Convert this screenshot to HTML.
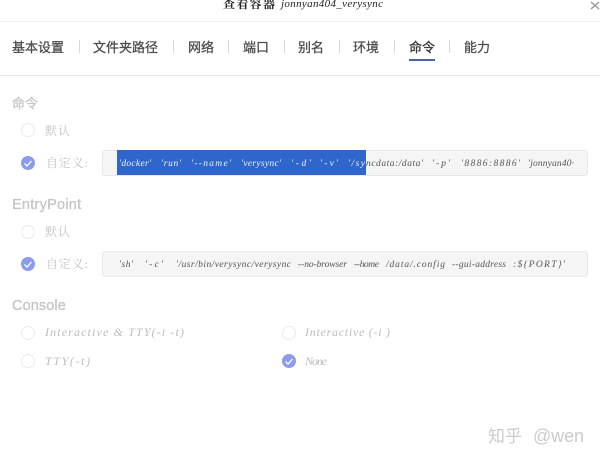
<!DOCTYPE html>
<html><head><meta charset="utf-8"><style>
html,body{margin:0;padding:0;background:#fff}
#p{position:relative;width:600px;height:461px;overflow:hidden;background:#fff;font-family:"Liberation Sans","Noto Sans CJK SC",sans-serif}
#p div{position:absolute;white-space:nowrap}
.tab{top:39px;font-size:13px;line-height:18px;color:#4d4d4d;font-weight:400;-webkit-text-stroke:.3px #4d4d4d}
.sep{top:40px;width:1px;height:13px;background:#d8d8d8}
.h{left:12px;font-size:14.5px;line-height:16px;color:#c6c6c6;font-weight:400;-webkit-text-stroke:.35px #c6c6c6}
.r{left:21px;width:12px;height:12px;border:1px solid #ececec;border-radius:50%;background:#fff}
.c{left:21px;width:14px;height:14px;border-radius:50%;background:#8c9bec}
.b{left:102px;width:484px;height:24px;background:#f5f5f5;border:1px solid #e9e9e9;border-radius:3px}
svg{position:absolute;left:0;top:0}
.l{font-family:"Liberation Serif","Noto Serif CJK SC",serif;font-style:italic;font-size:12px;fill:#bdbdbd}
.z{font-family:"Liberation Serif","Noto Serif CJK SC",serif;font-size:12px;fill:#c4c4c4}
.m{font-family:"Liberation Serif",serif;font-style:italic;font-size:9.5px;fill:#555}
.w{fill:#eef2fb}
</style></head><body><div id="p">
<div style="left:0;top:21px;width:600px;height:1px;background:#f1f1f1"></div>

<div class="tab" style="left:12px">基本设置</div><div class="sep" style="left:79px"></div>
<div class="tab" style="left:93px">文件夹路径</div><div class="sep" style="left:173px"></div>
<div class="tab" style="left:188px">网络</div><div class="sep" style="left:228px"></div>
<div class="tab" style="left:243px">端口</div><div class="sep" style="left:284px"></div>
<div class="tab" style="left:298px">别名</div><div class="sep" style="left:339px"></div>
<div class="tab" style="left:353px">环境</div><div class="sep" style="left:394px"></div>
<div class="tab" style="left:409px;color:#333;-webkit-text-stroke:.3px #333">命令</div><div class="sep" style="left:449px"></div>
<div class="tab" style="left:464px">能力</div>
<div style="left:409px;top:59px;width:26px;height:2px;background:#4a5fb0"></div>
<div style="left:0;top:75px;width:600px;height:1px;background:#e8e8e8"></div>

<div class="h" style="top:96px;font-size:13px">命令</div>
<div class="r" style="top:123px"></div>
<div class="c" style="top:156px"></div>
<div class="b" style="top:150px"></div>
<div style="left:117px;top:150px;width:249px;height:25px;background:#2f66cc"></div>

<div class="h" style="top:197px;letter-spacing:.25px">EntryPoint</div>
<div class="r" style="top:225px"></div>
<div class="c" style="top:257px"></div>
<div class="b" style="top:251px"></div>

<div class="h" style="top:298px;letter-spacing:.1px">Console</div>
<div class="r" style="top:326px"></div>
<div class="r" style="left:282px;top:326px"></div>
<div class="r" style="top:354px"></div>
<div class="c" style="left:282px;top:354px"></div>

<svg width="600" height="461">
<path d="M591 2L599 9M599 2L591 9" stroke="#999" stroke-width="1.4" fill="none"/>
<text x="223" y="8" textLength="52" lengthAdjust="spacing" style="font:bold 12px 'Noto Serif CJK SC',serif;fill:#222">查看容器</text>
<text x="281" y="7" textLength="102" lengthAdjust="spacing" style="font:italic 11px 'Liberation Serif',serif;fill:#222">jonnyan404_verysync</text>

<g stroke="#fff" stroke-width="1.3" fill="none"><path d="M24.500 163.500L27 166L31.500 161"/><path d="M24.500 264.500L27 267L31.500 262"/><path d="M285.500 361.500L288 364L292.500 359"/></g>

<text class="z" x="45" y="135" textLength="25" lengthAdjust="spacing">默认</text>
<text class="z" x="46" y="167" textLength="42" lengthAdjust="spacing">自定义:</text>
<text class="z" x="45" y="236" textLength="25" lengthAdjust="spacing">默认</text>
<text class="z" x="46" y="268" textLength="42" lengthAdjust="spacing">自定义:</text>

<text class="m w" x="119" y="166" textLength="32" lengthAdjust="spacing">'docker'</text>
<text class="m w" x="161" y="166" textLength="20" lengthAdjust="spacing">'run'</text>
<text class="m w" x="191" y="166" textLength="40" lengthAdjust="spacing">'--name'</text>
<text class="m w" x="241" y="166" textLength="40" lengthAdjust="spacing">'verysync'</text>
<text class="m w" x="291" y="166" textLength="20" lengthAdjust="spacing">'-d'</text>
<text class="m w" x="320" y="166" textLength="18" lengthAdjust="spacing">'-v'</text>
<text class="m w" x="348" y="166" textLength="17" lengthAdjust="spacing">'/sy</text>
<text class="m" x="366" y="166" textLength="57" lengthAdjust="spacing">ncdata:/data'</text>
<text class="m" x="432" y="166" textLength="18" lengthAdjust="spacing">'-p'</text>
<text class="m" x="461" y="166" textLength="59" lengthAdjust="spacing">'8886:8886'</text>
<text class="m" x="528" y="166" textLength="46" lengthAdjust="spacing">'jonnyan40·</text>

<text class="m" x="119" y="267" textLength="14" lengthAdjust="spacing">'sh'</text>
<text class="m" x="145" y="267" textLength="18" lengthAdjust="spacing">'-c'</text>
<text class="m" x="176" y="267" textLength="115" lengthAdjust="spacing">'/usr/bin/verysync/verysync</text>
<text class="m" x="298" y="267" textLength="49" lengthAdjust="spacing">--no-browser</text>
<text class="m" x="354" y="267" textLength="25" lengthAdjust="spacing">--home</text>
<text class="m" x="386" y="267" textLength="59" lengthAdjust="spacing">/data/.config</text>
<text class="m" x="452" y="267" textLength="54" lengthAdjust="spacing">--gui-address</text>
<text class="m" x="513" y="267" textLength="52" lengthAdjust="spacing">:${PORT}'</text>

<text class="l" x="45" y="336" textLength="139" lengthAdjust="spacing">Interactive &amp; TTY(-i -t)</text>
<text class="l" x="305" y="336" textLength="85" lengthAdjust="spacing">Interactive (-i )</text>
<text class="l" x="45" y="365" textLength="45" lengthAdjust="spacing">TTY(-t)</text>
<text class="l" x="305" y="365" textLength="22" lengthAdjust="spacing">None</text>

<text x="488" y="442" textLength="34" lengthAdjust="spacing" style="font:17px 'Noto Sans CJK SC',sans-serif;fill:#cbcbcb">知乎</text>
<text x="533" y="442" textLength="51" lengthAdjust="spacing" style="font:18px 'Liberation Sans',sans-serif;fill:#cbcbcb">@wen</text>
</svg>
</div></body></html>
